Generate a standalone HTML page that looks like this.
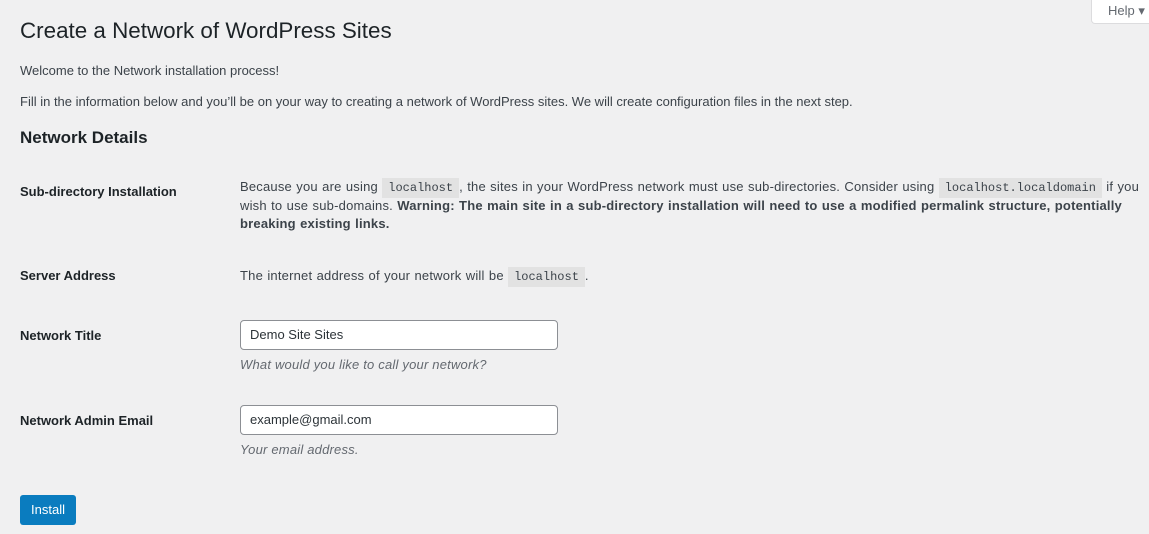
<!DOCTYPE html>
<html><head><meta charset="utf-8"><style>
html,body{margin:0;padding:0;background:#f0f0f1;}
body{width:1149px;height:534px;position:relative;overflow:hidden;font-family:"Liberation Sans",Arial,sans-serif;font-size:13px;color:#3c434a;}
.a{position:absolute;white-space:nowrap;line-height:18px;}
code{font-family:"Liberation Mono",monospace;font-size:12px;background:#e2e2e2;padding:3px 6px;color:#3c434a;letter-spacing:0;}
.lbl{font-weight:bold;color:#1d2327;}
.r{letter-spacing:0.2px;word-spacing:0.5px;}
.inp{position:absolute;left:240px;width:316px;height:28px;background:#fff;border:1px solid #8c8f94;border-radius:4px;}
.inp span{position:absolute;left:9px;top:6px;font-size:13px;color:#2c3338;}
.hint{font-style:italic;color:#646970;letter-spacing:0.2px;}
</style></head><body>
<div style="position:absolute;left:1091px;top:-1px;width:58px;height:24px;background:#fff;border:1px solid #dcdcde;border-top:none;border-radius:0 0 0 4px;"><span style="position:absolute;left:16px;top:4px;color:#646970;font-size:13px;">Help ▾</span></div>
<div class="a" style="left:20px;top:17px;font-size:22.4px;line-height:28px;color:#1d2327;">Create a Network of WordPress Sites</div>
<div class="a" style="left:20px;top:62px;">Welcome to the Network installation process!</div>
<div class="a" style="left:20px;top:93px;">Fill in the information below and you’ll be on your way to creating a network of WordPress sites. We will create configuration files in the next step.</div>
<div class="a" style="left:20px;top:128px;font-size:17px;line-height:20px;font-weight:bold;color:#1d2327;">Network Details</div>
<div class="a lbl" style="left:20px;top:183px;">Sub-directory Installation</div>
<div class="a r" style="left:240px;top:178px;">Because you are using <code>localhost</code>, the sites in your WordPress network must use sub-directories. Consider using <code>localhost.localdomain</code> if you<br>wish to use sub-domains. <b>Warning: The main site in a sub-directory installation will need to use a modified permalink structure, potentially<br>breaking existing links.</b></div>
<div class="a lbl" style="left:20px;top:267px;">Server Address</div>
<div class="a r" style="left:240px;top:267px;">The internet address of your network will be <code>localhost</code>.</div>
<div class="a lbl" style="left:20px;top:327px;">Network Title</div>
<div class="inp" style="top:320px;"><span>Demo Site Sites</span></div>
<div class="a hint" style="left:240px;top:356px;">What would you like to call your network?</div>
<div class="a lbl" style="left:20px;top:412px;">Network Admin Email</div>
<div class="inp" style="top:405px;"><span>example@gmail.com</span></div>
<div class="a hint" style="left:240px;top:441px;">Your email address.</div>
<div style="position:absolute;left:20px;top:495px;width:56px;height:30px;background:#0a7cbf;border-radius:3px;color:#fff;text-align:center;line-height:30px;font-size:13px;">Install</div>
</body></html>
